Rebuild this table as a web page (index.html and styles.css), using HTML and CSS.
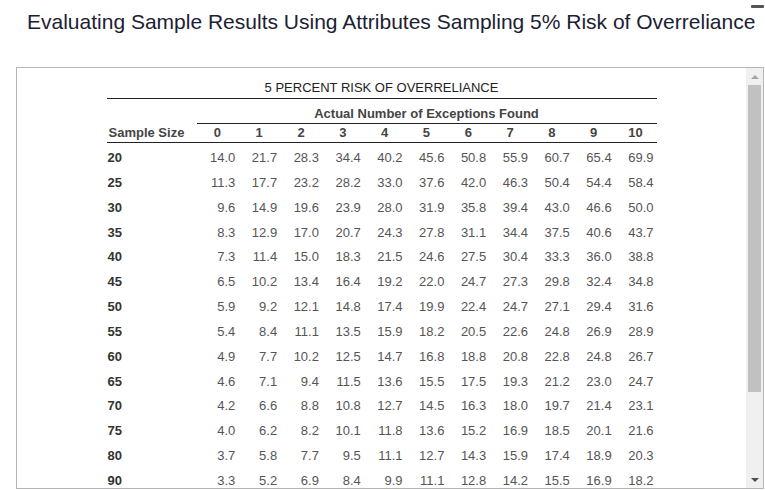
FILE: index.html
```html
<!DOCTYPE html>
<html lang="en">
<head>
<meta charset="utf-8">
<title>Evaluating Sample Results</title>
<link rel="stylesheet" href="styles.css">
</head>
<body>
<header class="page-head">
  <h1 class="title">Evaluating Sample Results Using Attributes Sampling 5% Risk of Overreliance</h1>
  <span class="corner-bar"></span>
</header>
<div class="frame">
  <div class="viewport">
    <table class="risk">
      <colgroup><col class="c-size"><col span="11"></colgroup>
      <thead>
        <tr><th colspan="12" class="caption">5 PERCENT RISK OF OVERRELIANCE</th></tr>
        <tr><th class="blank"></th><th colspan="11" class="group">Actual Number of Exceptions Found</th></tr>
        <tr class="cols">
          <th class="size">Sample Size</th>
          <th>0</th><th>1</th><th>2</th><th>3</th><th>4</th><th>5</th><th>6</th><th>7</th><th>8</th><th>9</th><th>10</th>
        </tr>
      </thead>
      <tbody>
        <tr><th>20</th><td>14.0</td><td>21.7</td><td>28.3</td><td>34.4</td><td>40.2</td><td>45.6</td><td>50.8</td><td>55.9</td><td>60.7</td><td>65.4</td><td>69.9</td></tr>
        <tr><th>25</th><td>11.3</td><td>17.7</td><td>23.2</td><td>28.2</td><td>33.0</td><td>37.6</td><td>42.0</td><td>46.3</td><td>50.4</td><td>54.4</td><td>58.4</td></tr>
        <tr><th>30</th><td>9.6</td><td>14.9</td><td>19.6</td><td>23.9</td><td>28.0</td><td>31.9</td><td>35.8</td><td>39.4</td><td>43.0</td><td>46.6</td><td>50.0</td></tr>
        <tr><th>35</th><td>8.3</td><td>12.9</td><td>17.0</td><td>20.7</td><td>24.3</td><td>27.8</td><td>31.1</td><td>34.4</td><td>37.5</td><td>40.6</td><td>43.7</td></tr>
        <tr><th>40</th><td>7.3</td><td>11.4</td><td>15.0</td><td>18.3</td><td>21.5</td><td>24.6</td><td>27.5</td><td>30.4</td><td>33.3</td><td>36.0</td><td>38.8</td></tr>
        <tr><th>45</th><td>6.5</td><td>10.2</td><td>13.4</td><td>16.4</td><td>19.2</td><td>22.0</td><td>24.7</td><td>27.3</td><td>29.8</td><td>32.4</td><td>34.8</td></tr>
        <tr><th>50</th><td>5.9</td><td>9.2</td><td>12.1</td><td>14.8</td><td>17.4</td><td>19.9</td><td>22.4</td><td>24.7</td><td>27.1</td><td>29.4</td><td>31.6</td></tr>
        <tr><th>55</th><td>5.4</td><td>8.4</td><td>11.1</td><td>13.5</td><td>15.9</td><td>18.2</td><td>20.5</td><td>22.6</td><td>24.8</td><td>26.9</td><td>28.9</td></tr>
        <tr><th>60</th><td>4.9</td><td>7.7</td><td>10.2</td><td>12.5</td><td>14.7</td><td>16.8</td><td>18.8</td><td>20.8</td><td>22.8</td><td>24.8</td><td>26.7</td></tr>
        <tr><th>65</th><td>4.6</td><td>7.1</td><td>9.4</td><td>11.5</td><td>13.6</td><td>15.5</td><td>17.5</td><td>19.3</td><td>21.2</td><td>23.0</td><td>24.7</td></tr>
        <tr><th>70</th><td>4.2</td><td>6.6</td><td>8.8</td><td>10.8</td><td>12.7</td><td>14.5</td><td>16.3</td><td>18.0</td><td>19.7</td><td>21.4</td><td>23.1</td></tr>
        <tr><th>75</th><td>4.0</td><td>6.2</td><td>8.2</td><td>10.1</td><td>11.8</td><td>13.6</td><td>15.2</td><td>16.9</td><td>18.5</td><td>20.1</td><td>21.6</td></tr>
        <tr><th>80</th><td>3.7</td><td>5.8</td><td>7.7</td><td>9.5</td><td>11.1</td><td>12.7</td><td>14.3</td><td>15.9</td><td>17.4</td><td>18.9</td><td>20.3</td></tr>
        <tr><th>90</th><td>3.3</td><td>5.2</td><td>6.9</td><td>8.4</td><td>9.9</td><td>11.1</td><td>12.8</td><td>14.2</td><td>15.5</td><td>16.9</td><td>18.2</td></tr>
      </tbody>
    </table>
  </div>
  <div class="scrollbar">
    <div class="sb-btn"><span class="arrow-up"></span></div>
    <div class="sb-track"><div class="sb-thumb"></div></div>
    <div class="sb-btn"><span class="arrow-down"></span></div>
  </div>
</div>
</body>
</html>
```
FILE: styles.css
```css
* { box-sizing: border-box; }
html, body { margin: 0; padding: 0; background: #fff; }
body {
  font-family: "Liberation Sans", Arial, sans-serif;
  width: 765px;
  height: 490px;
  overflow: hidden;
}
.page-head {
  position: relative;
  height: 67px;
  padding: 10px 0 0 27px;
}
.title {
  margin: 0;
  font-size: 21px;
  line-height: 24px;
  font-weight: normal;
  color: #1b2133;
  white-space: nowrap;
}
.corner-bar {
  position: absolute;
  top: 5px;
  right: 1px;
  width: 13px;
  height: 3px;
  border-radius: 1px;
  background: #555;
}
.frame {
  display: flex;
  margin-left: 16px;
  width: 748px;
  height: 422px;
  border: 1px solid #b5b5b5;
}
.viewport {
  flex: 1;
  overflow: hidden;
  padding-top: 11px;
}
.risk {
  width: 550px;
  margin: 0 auto;
  table-layout: fixed;
  border-collapse: separate;
  border-spacing: 0;
  font-size: 13px;
  line-height: 17px;
  color: #555;
}
.risk .c-size { width: 90px; }
.risk th, .risk td { padding: 0; white-space: nowrap; }
.risk .caption {
  font-weight: normal;
  color: #222;
  text-align: center;
  padding-bottom: 2px;
  border-bottom: 1px solid #222;
}
.risk .group {
  font-weight: bold;
  color: #444;
  text-align: center;
  padding: 6px 0 1px;
  border-bottom: 1px solid #222;
}
.risk .cols th {
  font-weight: bold;
  color: #444;
  text-align: center;
  padding-bottom: 1px;
  border-bottom: 1px solid #222;
}
.risk .cols .size {
  text-align: left;
  padding-left: 2px;
}
.risk tbody th {
  text-align: left;
  font-weight: bold;
  color: #333;
  padding: 6px 0 1.85px 1px;
}
.risk tbody td {
  text-align: right;
  padding: 6px 3px 1.85px 0;
}
.scrollbar {
  width: 17px;
  display: flex;
  flex-direction: column;
  background: #f0f0f0;
}
.sb-btn {
  height: 17px;
  display: flex;
  align-items: center;
  justify-content: center;
}
.arrow-up {
  width: 0; height: 0;
  border-left: 4px solid transparent;
  border-right: 4px solid transparent;
  border-bottom: 4px solid #a3a3a3;
}
.arrow-down {
  width: 0; height: 0;
  border-left: 4px solid transparent;
  border-right: 4px solid transparent;
  border-top: 4px solid #505050;
}
.sb-track { flex: 1; padding: 0 2px; }
.sb-thumb {
  height: 307px;
  background: #c1c1c1;
}
```
